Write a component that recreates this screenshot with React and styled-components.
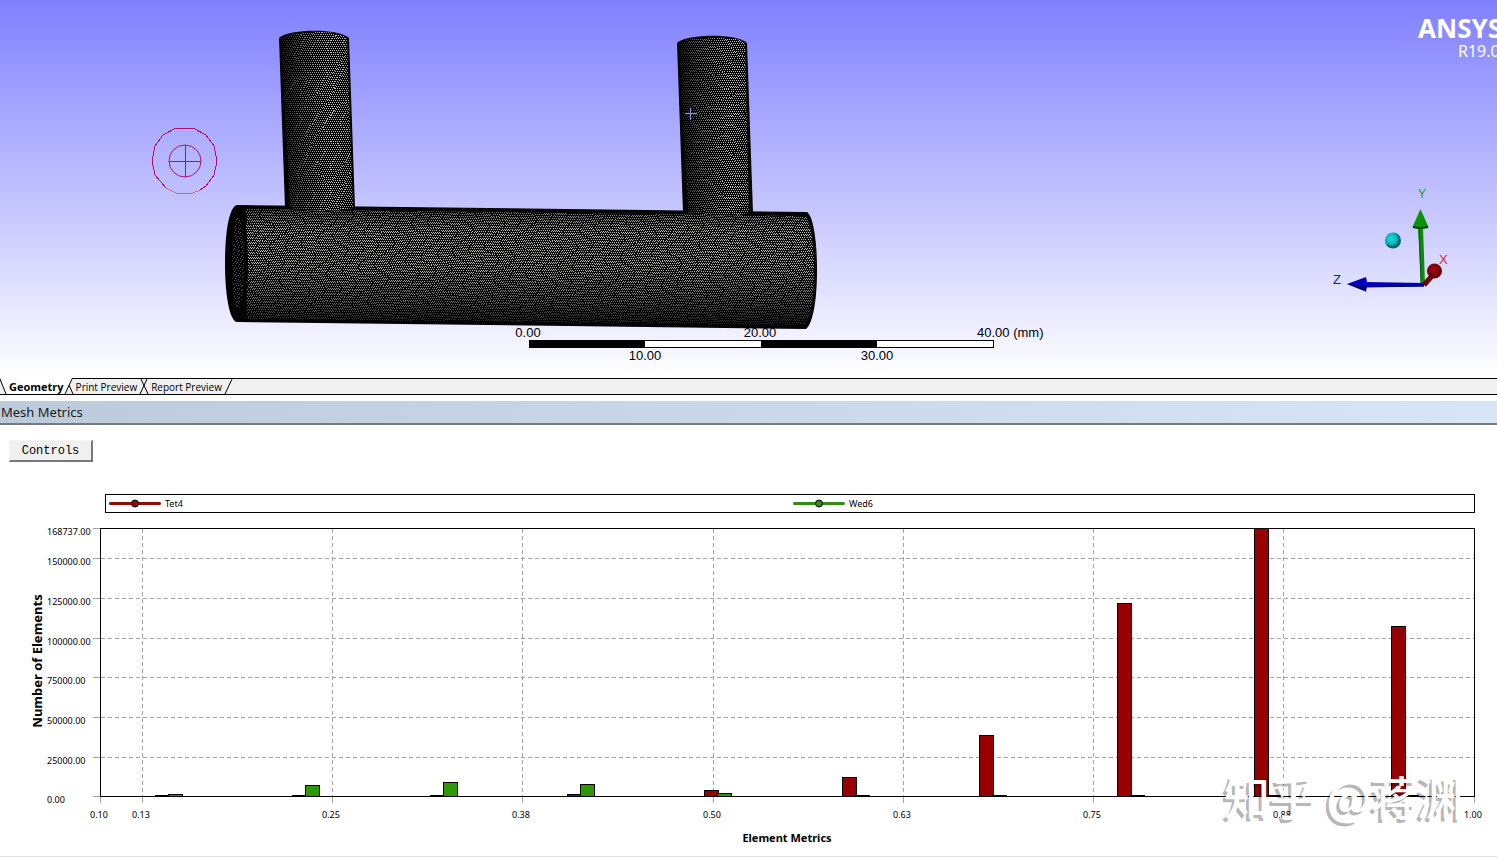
import React from 'react'
import styled, { createGlobalStyle } from 'styled-components'

const GlobalStyle = createGlobalStyle`
    * {
        box-sizing: border-box;
    }
    body {
        margin: 0;
        background: #fff;
        color: #000;
        font-family: "Noto Sans", "Open Sans", sans-serif;
        overflow-x: hidden;
    }
`

const Page = styled.div`
    display: flex;
    flex-direction: column;
`

const Viewport = styled.section`
    position: relative;
    overflow: hidden;
    background: linear-gradient(#8080ff, #fff);
`

const Drawing = styled.svg`
    display: block;
    width: 100%;
    height: auto;
`

const Brand = styled.div`
    position: absolute;
    top: 12px;
    left: calc(100% - 79px);
    color: #fff;
    white-space: nowrap;
`

const BrandName = styled.div`
    font-size: 26px;
    line-height: 32px;
    font-weight: bold;
`

const Release = styled.div`
    font-size: 16px;
    line-height: 14px;
    padding-left: 40px;
`

const TabStrip = styled.nav`
    display: flex;
    height: 17px;
    background: #f0f0f0;
    border-top: 1px solid #000;
    border-bottom: 1px solid #000;
`

const Tab = styled.button`
    height: 16px;
    margin-top: ${props => props.$active ? '-1px' : '0'};
    padding: ${props => props.$active ? '1px 0 0 1px' : '0 2px 0 1px'};
    border: none;
    background: ${props => props.$active ? '#fff' : 'transparent'};
    color: #000;
    font-family: "Open Sans", sans-serif;
    font-size: ${props => props.$active ? '11px' : '10px'};
    font-weight: ${props => props.$active ? 'bold' : 'normal'};
    line-height: 15px;
    white-space: nowrap;
`

const TabEdge = styled.svg`
    display: block;
    flex: none;
    height: 17px;
    margin-top: -1px;
`

const PanelTitle = styled.h2`
    margin: 6px 0 0;
    padding-left: 1px;
    height: 24px;
    border-bottom: 2px solid #777b80;
    background: linear-gradient(90deg, #bccbdb, #d7e6f6);
    color: #1b1b1b;
    font-size: 13px;
    line-height: 22px;
    font-weight: normal;
`

const Panel = styled.section`
    position: relative;
    padding-top: 15px;
    border-bottom: 1px solid #dedede;
`

const ControlsButton = styled.button`
    display: block;
    width: 84px;
    height: 22px;
    margin-left: 9px;
    padding: 0;
    border: solid;
    border-width: 1px 2px 2px 1px;
    border-color: #f4f4f4 #777 #777 #f4f4f4;
    background: #f0f0f0;
    color: #000;
    font-family: "Liberation Mono", monospace;
    font-size: 12px;
    line-height: 18px;
`

const Legend = styled.div`
    display: grid;
    grid-template-columns: 1fr 1fr;
    height: 19px;
    margin: 32px 22px 0 105px;
    border: 1px solid #000;
`

const LegendItem = styled.div`
    display: flex;
    align-items: center;
    gap: 4px;
    padding-left: 3px;
    font-size: 9px;
    line-height: 16px;
`

const Watermark = styled.div`
    position: absolute;
    right: 34px;
    bottom: 31px;
    color: #fff;
    font-family: "Noto Sans CJK SC", sans-serif;
    font-size: 46px;
    font-weight: 500;
    line-height: 60px;
    text-shadow: -3px 3px 0 rgba(0, 0, 0, 0.3);
    white-space: nowrap;
    pointer-events: none;
`

// Small facets of the surface mesh, snapped to whole pixels
const facets = ({ x, y, w, h, dx, dy, tilt, sway = 0 }) => {
    let d = ''
    for (let r = 0; r * dy < h; r++) {
        for (let c = 0; c * dx < w; c++) {
            const px = x + c * dx + (r % 2) * dx / 2 + r * sway + Math.sin(r * 0.31 + c * 0.07) * 0.6
            const py = y + r * dy + c * dx * tilt + Math.sin(c * 0.23 + r * 0.11) * 0.5
            d += `M${Math.round(px)} ${Math.round(py)}h1v1h-1z`
        }
    }
    return d
}

const bodyFacets = facets({ x: 246, y: 207, w: 572, h: 118, dx: 2.14, dy: 1.72, tilt: 0.0117, sway: 0.02 })
const leftFacets = facets({ x: 279, y: 32, w: 72, h: 180, dx: 1.9, dy: 1.94, tilt: -0.03, sway: 0.065 })
const rightFacets = facets({ x: 677, y: 38, w: 72, h: 180, dx: 2.05, dy: 1.85, tilt: 0.02, sway: 0.06 })
const boreFacets = facets({ x: 232, y: 216, w: 13, h: 94, dx: 2.6, dy: 2.2, tilt: 0.3 })

const bodyShape = 'M237 205L807 212C813 216 817 240 817 270C817 300 813 323 806 329L236 322C229 318 225 294 225 263C225 232 229 207 237 205Z'
const leftShape = 'M279 38C289 29 338 28 349 38L355 208Q325 214 285 208Z'
const rightShape = 'M677 43C687 34 736 33 747 43L753 213Q720 219 683 213Z'
const bodySurface = 'M244 209L805 216C811 222 814 245 814 270C814 296 811 319 804 325L244 319Q252 263 244 209Z'
const leftSurface = 'M281 39C291 30 337 29 347 38L353 208Q325 214 290 208Z'
const rightSurface = 'M679 44C689 35 735 34 745 43L749 213Q720 219 688 213Z'

const Pipe = () => (
    <g>
        <defs>
            <linearGradient id="bodyLight" x1="0" y1="0" x2="0" y2="1">
                <stop offset="0" stopColor="#666" />
                <stop offset="0.18" stopColor="#b8b8b4" />
                <stop offset="0.48" stopColor="#b4b4b0" />
                <stop offset="0.75" stopColor="#6c6c6a" />
                <stop offset="0.95" stopColor="#222" />
            </linearGradient>
            <linearGradient id="legLight" x1="0" y1="0" x2="1" y2="0">
                <stop offset="0" stopColor="#141414" />
                <stop offset="0.3" stopColor="#707070" />
                <stop offset="0.65" stopColor="#c4c4be" />
                <stop offset="0.9" stopColor="#aaa" />
            </linearGradient>
            <clipPath id="bodyClip"><path d={bodySurface} /></clipPath>
            <clipPath id="leftClip"><path d={leftSurface} /></clipPath>
            <clipPath id="rightClip"><path d={rightSurface} /></clipPath>
            <clipPath id="boreClip"><ellipse cx="238" cy="263" rx="6" ry="46" /></clipPath>
        </defs>
        <path d={bodyShape} />
        <path d={bodySurface} fill="url(#bodyLight)" opacity="0.08" />
        <g clipPath="url(#bodyClip)">
            <path d={bodyFacets} fill="url(#bodyLight)" shapeRendering="crispEdges" />
        </g>
        <g clipPath="url(#boreClip)">
            <path d={boreFacets} fill="#505066" shapeRendering="crispEdges" />
        </g>
        <path d={leftShape} />
        <g clipPath="url(#leftClip)">
            <path d={leftFacets} fill="url(#legLight)" shapeRendering="crispEdges" />
        </g>
        <path d={rightShape} />
        <g clipPath="url(#rightClip)">
            <path d={rightFacets} fill="url(#legLight)" shapeRendering="crispEdges" />
        </g>
        <path d="M685 113.500h12M690.500 108v12" stroke="#8c8cf0" />
    </g>
)

const Target = () => (
    <g fill="none" stroke="#b0106a">
        <g shapeRendering="crispEdges">
            <path d="M166 188L155 175L152 161L155 146L163 135L176 128H193L206 135L214 146L217 161L214 175L206 186L200 190" />
            <path d="M166 188L176 193H193L200 190" stroke="#c4707c" />
        </g>
        <circle cx="185" cy="161" r="16" />
        <path d="M169 161.500H201" />
        <path d="M185.500 145V177" />
    </g>
)

const Ruler = () => (
    <g fontFamily="Liberation Sans, sans-serif" fontSize="13" textAnchor="middle">
        <rect x="529.500" y="340.500" width="464" height="7" fill="#fff" stroke="#000" />
        <rect x="529" y="340" width="116" height="8" />
        <rect x="761" y="340" width="116" height="8" />
        <text x="528" y="337">0.00</text>
        <text x="760" y="337">20.00</text>
        <text x="977" y="337" textAnchor="start">40.00 (mm)</text>
        <text x="645" y="360">10.00</text>
        <text x="877" y="360">30.00</text>
    </g>
)

const Triad = () => (
    <g fontFamily="Liberation Sans, sans-serif" fontSize="13">
        <defs>
            <radialGradient id="cyanBall" cx="0.4" cy="0.4">
                <stop offset="0" stopColor="#19dcdc" />
                <stop offset="0.7" stopColor="#0cb4b8" />
                <stop offset="1" stopColor="#066" />
            </radialGradient>
            <radialGradient id="redBall" cx="0.45" cy="0.4">
                <stop offset="0" stopColor="#b8000c" />
                <stop offset="1" stopColor="#600008" />
            </radialGradient>
        </defs>
        <path d="M1418 227H1423L1425 284H1421Z" fill="#0a8c0a" />
        <path d="M1419 227L1421 283" stroke="#045c04" />
        <path d="M1420.500 209L1428.500 227Q1420 230 1412.500 227Z" fill="#0b930b" />
        <path d="M1413 227Q1420 229 1428 227" fill="none" stroke="#034803" strokeWidth="2" />
        <path d="M1366 282L1424 283V286.500L1366 287Z" fill="#0000b8" />
        <path d="M1366 287L1424 286" stroke="#000068" />
        <path d="M1347 284L1366 277Q1368 284 1366 291.500Z" fill="#0000b8" />
        <path d="M1347 284L1366 291.500V286Z" fill="#000074" />
        <path d="M1424 285L1432 276" stroke="#720006" strokeWidth="5" />
        <circle cx="1434.500" cy="271" r="7.500" fill="url(#redBall)" />
        <circle cx="1393" cy="240.500" r="8" fill="url(#cyanBall)" />
        <text x="1418" y="198" fill="#1b9a2f" fontSize="12">Y</text>
        <text x="1439" y="264" fill="#e02038">X</text>
        <text x="1333" y="284" fill="#1818a8">Z</text>
    </g>
)

const tabs = [
    { label: 'Geometry', active: true },
    { label: 'Print Preview' },
    { label: 'Report Preview' },
]

const yTicks = [
    ['168737.00', 528], ['150000.00', 558], ['125000.00', 598], ['100000.00', 638],
    ['75000.00', 677], ['50000.00', 717], ['25000.00', 757], ['0.00', 796],
]

const xTicks = [
    ['0.10', 100], ['0.13', 142], ['0.25', 332], ['0.38', 522], ['0.50', 713],
    ['0.63', 903], ['0.75', 1093], ['0.88', 1283], ['1.00', 1474],
]

// x of the pair, then the height of Tet4 and of Wed6
const bars = [
    [155, 1, 2], [292, 1, 11], [430, 1, 14], [567, 2, 12], [704, 6, 3],
    [842, 19, 1], [979, 61, 1], [1117, 193, 1], [1254, 268, 1], [1391, 170, 1],
]

const Chart = () => (
    <Drawing viewBox="0 513 1497 343" fontSize="9" role="img" aria-label="Number of Elements by Element Metrics">
        <g stroke="#a4a4a4" shapeRendering="crispEdges">
            {yTicks.map(([label, y]) => (
                <g key={label}>
                    <path d={`M93 ${y}.500H100`} />
                    {y > 528 && y < 796 && <path d={`M101 ${y}.500H1474`} strokeDasharray="4 3" />}
                </g>
            ))}
            {xTicks.map(([label, x]) => (
                <g key={label}>
                    <path d={`M${x}.500 797V803`} />
                    {x > 100 && x < 1474 && <path d={`M${x}.500 529V796`} strokeDasharray="4 3" />}
                </g>
            ))}
        </g>
        <rect x="100.500" y="528.500" width="1374" height="268" fill="none" stroke="#000" shapeRendering="crispEdges" />
        <g stroke="#000" shapeRendering="crispEdges">
            {bars.map(([x, tet, wed]) => (
                <g key={x}>
                    <rect x={x + 0.5} y={796.5 - tet} width="14" height={tet} fill="#960000" />
                    <rect x={x + 13.5} y={796.5 - wed} width="14" height={wed} fill="#2f9606" />
                </g>
            ))}
        </g>
        {yTicks.map(([label, y]) => <text key={label} x="47" y={y + 7}>{label}</text>)}
        <g textAnchor="middle">
            {xTicks.map(([label, x]) => <text key={label} x={x - 1} y="818">{label}</text>)}
        </g>
        <text x="787" y="842" fontSize="11" fontWeight="bold" textAnchor="middle">Element Metrics</text>
        <text transform="translate(42 661) rotate(-90)" fontSize="13" fontWeight="bold" textAnchor="middle">Number of Elements</text>
    </Drawing>
)

const LegendMark = ({ color }) => (
    <svg width="52" height="9" aria-hidden="true">
        <path d="M1.500 4.500H50.500" stroke={color} strokeWidth="3" strokeLinecap="round" />
        <circle cx="26" cy="4.500" r="3.500" fill={color} stroke="#000" />
    </svg>
)

const App = () => {
    return (
        <Page>
            <GlobalStyle />
            <Viewport>
                <Drawing viewBox="0 0 1497 378" role="img" aria-label="Meshed pipe">
                    <Ruler />
                    <Pipe />
                    <Target />
                    <Triad />
                </Drawing>
                <Brand>
                    <BrandName>ANSYS</BrandName>
                    <Release>R19.0</Release>
                </Brand>
            </Viewport>
            <TabStrip>
                <TabEdge width="8" viewBox="0 0 8 17">
                    <path d="M0 0H8V16H6Z" fill="#fff" />
                    <path d="M0 1L6 16" stroke="#000" />
                </TabEdge>
                {tabs.map(({ label, active }, index) => (
                    <React.Fragment key={label}>
                        <Tab type="button" $active={active}>{label}</Tab>
                        <TabEdge width="11" viewBox="0 0 11 17">
                            {active && <path d="M0 0H8L1 16H0Z" fill="#fff" />}
                            <path d="M1 16L8 1" stroke="#000" fill="none" />
                            {index < 2 && <path d={index ? 'M2 1L9 16' : 'M5 7L9 16'} stroke="#000" fill="none" />}
                        </TabEdge>
                    </React.Fragment>
                ))}
            </TabStrip>
            <PanelTitle>Mesh Metrics</PanelTitle>
            <Panel>
                <ControlsButton type="button">Controls</ControlsButton>
                <Legend>
                    <LegendItem><LegendMark color="#8c0c08" />Tet4</LegendItem>
                    <LegendItem><LegendMark color="#348a14" />Wed6</LegendItem>
                </Legend>
                <Chart />
                <Watermark>知乎 @蒋渊</Watermark>
            </Panel>
        </Page>
    )
}

export default App
